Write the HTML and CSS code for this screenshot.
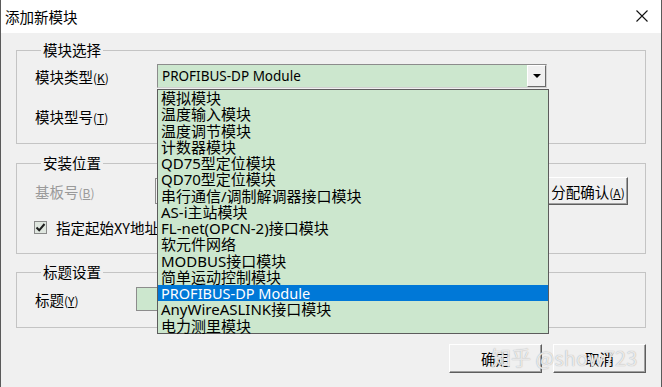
FILE: index.html
```html
<!DOCTYPE html>
<html lang="zh-CN">
<head>
  <meta charset="UTF-8">
  <title>添加新模块</title>
  <link rel="stylesheet" href="styles.css">
</head>
<body>
  <div id="dialog">
    <div id="title-bar">
      <span class="title">添加新模块</span>
      <svg class="close" width="12" height="12" viewBox="0 0 12 12">
        <path d="M0.5 0.5 L11.5 11.5 M11.5 0.5 L0.5 11.5" stroke="#111" stroke-width="1.1" fill="none"/>
      </svg>
    </div>
    <div id="content">
      <fieldset class="group group-module">
        <legend>模块选择</legend>
        <div class="row">
          <label class="label w-wide">模块类型<small>(<u>K</u>)</small></label>
          <div class="combo">
            <span class="combo-text">PROFIBUS-DP Module</span>
            <span class="combo-btn"><i class="arrow"></i></span>
          </div>
        </div>
        <div class="row row-2">
          <label class="label w-wide">模块型号<small>(<u>T</u>)</small></label>
          <div class="combo"></div>
        </div>
      </fieldset>

      <fieldset class="group group-place">
        <legend>安装位置</legend>
        <div class="row row-tall">
          <label class="label w-base disabled">基板号<small>(<u>B</u>)</small></label>
          <div class="field"></div>
          <button class="btn btn-assign">分配确认<small>(<u>A</u>)</small></button>
        </div>
        <div class="row row-tall row-check">
          <span class="checkbox">
            <svg width="11" height="11" viewBox="0 0 11 11"><path d="M1.5 5.5 L4.2 8.3 L9.5 2" stroke="#1e1e1e" stroke-width="2" fill="none"/></svg>
          </span>
          <label class="check-label">指定起始XY地址</label>
        </div>
      </fieldset>

      <fieldset class="group group-title">
        <legend>标题设置</legend>
        <div class="row">
          <label class="label w-title">标题<small>(<u>Y</u>)</small></label>
          <div class="field green"></div>
        </div>
      </fieldset>

      <div id="footer">
        <button class="btn btn-ok">确定</button>
        <button class="btn btn-cancel">取消</button>
      </div>
    </div>

    <ul id="dropdown">
      <li>模拟模块</li>
      <li>温度输入模块</li>
      <li>温度调节模块</li>
      <li>计数器模块</li>
      <li>QD75型定位模块</li>
      <li>QD70型定位模块</li>
      <li>串行通信/调制解调器接口模块</li>
      <li>AS-i主站模块</li>
      <li>FL-net(OPCN-2)接口模块</li>
      <li>软元件网络</li>
      <li>MODBUS接口模块</li>
      <li>简单运动控制模块</li>
      <li class="selected">PROFIBUS-DP Module</li>
      <li>AnyWireASLINK接口模块</li>
      <li>电力测里模块</li>
    </ul>

    <div id="watermark">知乎 @show723</div>
  </div>
</body>
</html>
```

FILE: styles.css
```css
html, body {
  margin: 0;
  padding: 0;
  background: #3a3a3a;
}
body {
  font-family: "Noto Sans", "Noto Sans CJK SC", sans-serif;
  font-size: 15px;
  color: #000;
}
#dialog {
  position: relative;
  width: 660px;
  height: 387px;
  border-left: 1px solid #5a5a5a;
  border-right: 1px solid #5a5a5a;
  background: #f0f0f0;
  overflow: hidden;
}
#title-bar {
  height: 33px;
  background: #fff;
  display: flex;
  align-items: center;
  justify-content: space-between;
  padding: 0 13px 0 4px;
}
#title-bar .title {
  font-family: "Noto Sans CJK SC", sans-serif;
  font-size: 14.5px;
  margin-top: -1px;
}
#title-bar .close {
  margin-top: -1px;
}
#content {
  padding: 7px 15px 0;
}
.group {
  box-sizing: border-box;
  margin: 0;
  padding: 0 17px 0 18px;
  border: 1px solid #c4c4c4;
  min-width: 0;
}
.group legend {
  font-family: "Noto Sans CJK SC", sans-serif;
  font-size: 14.5px;
  line-height: 20px;
  padding: 0 2px;
  margin-left: 6px;
}
.group-module {
  height: 104px;
  padding-top: 4px;
}
.group-place {
  height: 101px;
  margin-top: 9px;
  padding-top: 4px;
}
.group-title {
  height: 66px;
  margin-top: 8px;
  padding-top: 5px;
}
.row {
  display: flex;
  align-items: center;
  height: 24px;
}
.row-2 {
  margin-top: 16px;
}
.row-tall {
  height: 28px;
}
.row-check {
  margin-top: 8px;
}
.label {
  font-family: "Noto Sans CJK SC", sans-serif;
  font-size: 14.5px;
  flex: none;
}
.label small, .btn small {
  font-size: 12px;
}
.w-wide { width: 122px; }
.w-base { width: 120px; }
.w-title { width: 101px; }
.disabled { color: #9a9a9a; }

.combo {
  box-sizing: border-box;
  width: 390px;
  height: 24px;
  background: #cce7ce;
  border: 1px solid #8c8c8c;
  border-right-color: #d0d0d0;
  border-bottom-color: #d0d0d0;
  display: flex;
  align-items: center;
  justify-content: space-between;
}
.combo-text {
  padding-left: 4px;
  font-size: 13.5px;
}
.combo-btn {
  box-sizing: border-box;
  width: 19px;
  height: 22px;
  background: #f0f0f0;
  border: 1px solid #fff;
  border-right-color: #6a6a6a;
  border-bottom-color: #6a6a6a;
  display: flex;
  align-items: center;
  justify-content: center;
}
.arrow {
  width: 0;
  height: 0;
  border-left: 4px solid transparent;
  border-right: 4px solid transparent;
  border-top: 4px solid #000;
}
.field {
  box-sizing: border-box;
  width: 380px;
  height: 26px;
  border: 1px solid #8c8c8c;
  background: #f0f0f0;
}
.field.green {
  width: 404px;
  height: 24px;
  background: #cce7ce;
}
.btn {
  box-sizing: border-box;
  font-family: "Noto Sans CJK SC", sans-serif;
  font-size: 14.5px;
  color: #000;
  background: #f0f0f0;
  border: 1px solid #fff;
  border-right-color: #5e5e5e;
  border-bottom-color: #5e5e5e;
  box-shadow: inset -1px -1px 0 #a0a0a0;
  padding: 0;
}
.btn-assign {
  width: 80px;
  height: 28px;
  margin-left: auto;
}
.checkbox {
  box-sizing: border-box;
  width: 13px;
  height: 13px;
  border: 1px solid #8a8a8a;
  background: #dfe6df;
  display: flex;
  align-items: center;
  justify-content: center;
  margin-left: -1px;
}
.check-label {
  font-family: "Noto Sans CJK SC", sans-serif;
  font-size: 14.5px;
  margin-left: 9px;
}
#footer {
  display: flex;
  justify-content: flex-end;
  gap: 11px;
  margin-top: 16px;
}
.btn-ok, .btn-cancel {
  width: 93px;
  height: 29px;
}

#dropdown {
  position: absolute;
  left: 156px;
  top: 89px;
  width: 392px;
  height: 245px;
  box-sizing: border-box;
  margin: 0;
  padding: 0;
  list-style: none;
  background: #cce7ce;
  border: 1px solid #5c5c5c;
}
#dropdown li {
  height: 16.25px;
  line-height: 16.25px;
  padding-left: 3px;
  font-size: 15px;
  white-space: nowrap;
}
#dropdown li.selected {
  background: #0078d7;
  color: #fff;
  font-size: 14.5px;
}
#watermark {
  position: absolute;
  left: 490px;
  top: 344px;
  font-family: "Noto Sans CJK SC", sans-serif;
  font-size: 20px;
  line-height: 28px;
  color: rgba(255, 255, 255, 0.75);
  text-shadow: 0 0 1px #9a9a9a;
  pointer-events: none;
}
```
